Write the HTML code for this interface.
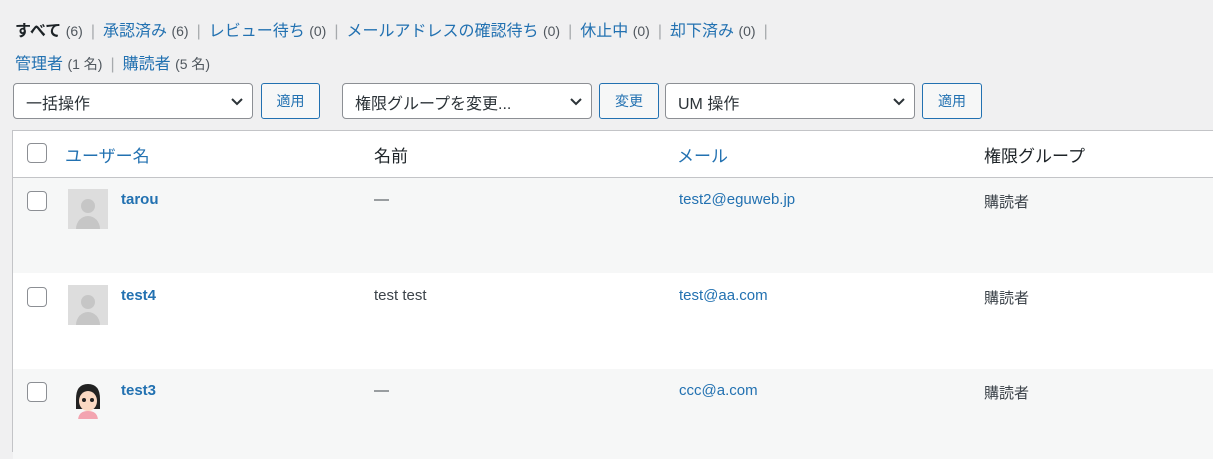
<!DOCTYPE html>
<html><head><meta charset="utf-8"><style>
body{margin:0;width:1213px;height:444px;background:#f0f0f1;font-family:"Liberation Sans","Noto Sans CJK JP",sans-serif;font-size:14px;color:#3c434a;position:relative;overflow:hidden}
a{color:#2271b1;text-decoration:none}
.abs{position:absolute;white-space:nowrap;font-size:16px}
.cnt{color:#50575e;font-size:14px}
.sep{color:#a7aaad;margin:0 8px}
.sel{position:absolute;top:83px;height:36px;box-sizing:border-box;border:1px solid #8c8f94;border-radius:4px;background:#fff;font-size:16px;color:#2c3338;padding:6px 12px}
.sel svg{position:absolute;right:8px;top:13px}
.btn{position:absolute;top:83px;height:36px;box-sizing:border-box;border:1px solid #2271b1;border-radius:3px;background:#f6f7f7;color:#2271b1;font-size:14px;text-align:center;line-height:34px}
.tbl{position:absolute;left:12px;top:130px;width:1210px;height:320px;border:1px solid #c3c4c7;background:#fff}
.row{position:absolute;left:0;width:100%}
.cb{position:absolute;left:14px;width:20px;height:20px;border:1px solid #8c8f94;border-radius:4px;background:#fff;box-sizing:border-box}
.av{position:absolute;left:55px;width:40px;height:40px;background:#ddd;overflow:hidden}
.nm{position:absolute;left:108px;font-weight:bold;color:#2271b1;font-size:15px}
.t{position:absolute;font-size:15px}
</style></head><body>
<div class="abs" style="left:15px;top:17px"><b style="color:#1d2327">すべて</b> <span class="cnt">(6)</span><span class="sep">|</span><a>承認済み</a> <span class="cnt">(6)</span><span class="sep">|</span><a>レビュー待ち</a> <span class="cnt">(0)</span><span class="sep">|</span><a>メールアドレスの確認待ち</a> <span class="cnt">(0)</span><span class="sep">|</span><a>休止中</a> <span class="cnt">(0)</span><span class="sep">|</span><a>却下済み</a> <span class="cnt">(0)</span><span class="sep">|</span></div>
<div class="abs" style="left:15px;top:50px"><a>管理者</a> <span class="cnt">(1 名)</span><span class="sep">|</span><a>購読者</a> <span class="cnt">(5 名)</span></div>
<div class="sel" style="left:13px;width:240px">一括操作<svg width="14" height="10" viewBox="0 0 14 10"><path d="M2 2l5 5 5-5" stroke="#2c3338" stroke-width="2" fill="none"/></svg></div>
<div class="btn" style="left:261px;width:59px">適用</div>
<div class="sel" style="left:342px;width:250px">権限グループを変更...<svg width="14" height="10" viewBox="0 0 14 10"><path d="M2 2l5 5 5-5" stroke="#2c3338" stroke-width="2" fill="none"/></svg></div>
<div class="btn" style="left:599px;width:60px">変更</div>
<div class="sel" style="left:665px;width:250px">UM 操作<svg width="14" height="10" viewBox="0 0 14 10"><path d="M2 2l5 5 5-5" stroke="#2c3338" stroke-width="2" fill="none"/></svg></div>
<div class="btn" style="left:922px;width:60px">適用</div>
<div class="tbl">
 <div class="row" style="top:0;height:46px;border-bottom:1px solid #c3c4c7;background:#fff">
  <div class="cb" style="top:12px"></div>
  <a class="t" style="left:52px;top:11px;font-size:17px">ユーザー名</a>
  <span class="t" style="left:361px;top:11px;font-size:17px;color:#1d2327">名前</span>
  <a class="t" style="left:664px;top:11px;font-size:17px">メール</a>
  <span class="t" style="left:971px;top:11px;font-size:17px;color:#1d2327">権限グループ</span>
 </div>
 <div class="row" style="top:47px;height:95px;background:#f6f7f7">
  <div class="cb" style="top:13px"></div>
  <div class="av" style="top:11px"><svg width="40" height="40"><circle cx="20" cy="17" r="7" fill="#c6c6c6"/><ellipse cx="20" cy="40" rx="12" ry="13" fill="#c6c6c6"/></svg></div>
  <span class="nm" style="top:13px">tarou</span>
  <span class="t" style="left:361px;top:13px">—</span>
  <a class="t" style="left:666px;top:13px">test2@eguweb.jp</a>
  <span class="t" style="left:971px;top:13px">購読者</span>
 </div>
 <div class="row" style="top:142px;height:96px;background:#fff">
  <div class="cb" style="top:14px"></div>
  <div class="av" style="top:12px"><svg width="40" height="40"><circle cx="20" cy="17" r="7" fill="#c6c6c6"/><ellipse cx="20" cy="40" rx="12" ry="13" fill="#c6c6c6"/></svg></div>
  <span class="nm" style="top:14px">test4</span>
  <span class="t" style="left:361px;top:14px">test test</span>
  <a class="t" style="left:666px;top:14px">test@aa.com</a>
  <span class="t" style="left:971px;top:14px">購読者</span>
 </div>
 <div class="row" style="top:238px;height:90px;background:#f6f7f7">
  <div class="cb" style="top:13px"></div>
  <div class="av" style="top:10px;background:transparent"><svg width="40" height="42"><path d="M8 20q0-15 12-15t12 15v10h-24z" fill="#222"/><ellipse cx="20" cy="22" rx="9" ry="10" fill="#fbd9c3"/><circle cx="16" cy="21" r="2" fill="#222"/><circle cx="24" cy="21" r="2" fill="#222"/><path d="M10 42q0-10 10-10t10 10z" fill="#f3a4b0"/></svg></div>
  <span class="nm" style="top:13px">test3</span>
  <span class="t" style="left:361px;top:13px">—</span>
  <a class="t" style="left:666px;top:13px">ccc@a.com</a>
  <span class="t" style="left:971px;top:13px">購読者</span>
 </div>
</div>
</body></html>
